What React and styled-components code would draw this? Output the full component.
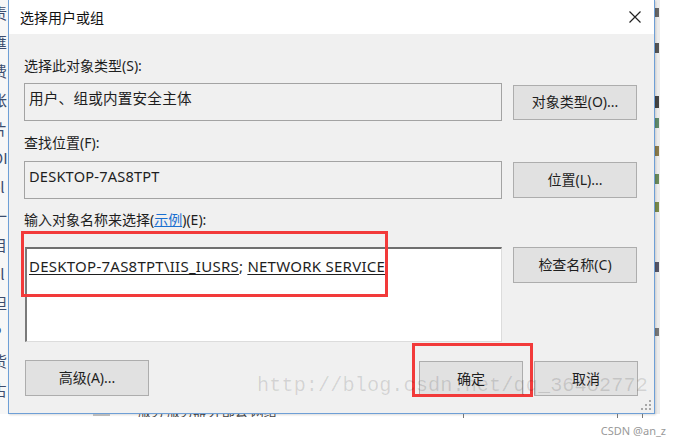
import React from "react";
import styled, { createGlobalStyle } from "styled-components";

const Global = createGlobalStyle`
  html, body {
    margin: 0;
    padding: 0;
    background: #fff;
  }
  body {
    font-family: "Noto Sans", "Noto Sans CJK SC", sans-serif;
    color: #1e1e1e;
    overflow: hidden;
  }
`;

const Page = styled.div`
  width: 681px;
  height: 443px;
  display: flex;
  flex-direction: column;
  background: #fff;
`;

const Desk = styled.div`
  display: flex;
  height: 414px;
`;

const LeftEdge = styled.div`
  width: 8px;
  overflow: hidden;
  background: #f7f7f7;
  display: flex;
  flex-direction: column;
  padding-top: 4px;
  gap: 12px;
  span {
    display: block;
    margin-left: -8px;
    font: 15px/17px "Noto Sans CJK SC", sans-serif;
    color: #3b4d70;
  }
`;

const RightEdge = styled.div`
  flex: 1;
  display: flex;
`;

const RightStrip = styled.div`
  width: 5px;
  background: #ededed;
  display: flex;
  flex-direction: column;
  padding-top: 8px;
  gap: 8px;
`;

const Mark = styled.div`
  width: 4px;
  height: ${(p) => p.h || 8}px;
  margin-top: ${(p) => p.gap || 0}px;
  background: ${(p) => p.c || "#555"};
`;

const Dialog = styled.div`
  position: relative;
  width: 645px;
  border: 1px solid #6e9fd6;
  border-top: none;
  background: #f0f0f0;
  display: flex;
  flex-direction: column;
  box-shadow: 1px 1px 2px rgba(0, 0, 0, 0.15);
`;

const TitleBar = styled.div`
  height: 34px;
  background: #fff;
  display: flex;
  align-items: center;
  justify-content: space-between;
  padding: 0 12px 0 11px;
  font-size: 14px;
  color: #111;
`;

const Body = styled.div`
  display: flex;
  flex-direction: column;
  padding: 23px 16px 15px 15px;
`;

const Label = styled.div`
  font-size: 14px;
  line-height: 18px;
  margin-top: ${(p) => p.top || 0}px;
  a {
    color: #1a6fd0;
    text-decoration: underline;
  }
`;

const Row = styled.div`
  position: relative;
  display: grid;
  grid-template-columns: 478px 124px;
  column-gap: 11px;
  align-items: ${(p) => (p.top ? "start" : "center")};
  margin-top: ${(p) => p.gap || 0}px;
`;

const Field = styled.div`
  height: 38px;
  box-sizing: border-box;
  border: 1px solid #a3a3a3;
  background: #f0f0f0;
  padding: 4px 4px;
  font-size: 14.6px;
  line-height: 20px;
  letter-spacing: 0.2px;
`;

const NameBox = styled.div`
  margin-left: 1px;
  height: 95px;
  box-sizing: border-box;
  background: #fff;
  border-top: 2px solid #6f6f6f;
  border-left: 2px solid #7a7a7a;
  border-right: 1px solid #dcdcdc;
  border-bottom: 1px solid #dcdcdc;
  padding: 8px 2px;
  font-size: 15px;
  line-height: 18px;
  letter-spacing: 0.25px;
  white-space: nowrap;
`;

const Name = styled.span`
  text-decoration: underline;
  text-underline-offset: 2px;
`;

const Button = styled.button`
  position: relative;
  width: ${(p) => p.w || 124}px;
  height: ${(p) => p.h || 36}px;
  box-sizing: border-box;
  background: #e1e1e1;
  border: 1px solid #adadad;
  font-family: "Noto Sans", "Noto Sans CJK SC", sans-serif;
  font-size: 14px;
  color: #1e1e1e;
  padding: 0 0 2px;
`;

const SideButtons = styled.div`
  display: flex;
  flex-direction: column;
  padding-top: ${(p) => p.pad || 0}px;
`;

const Footer = styled.div`
  display: flex;
  justify-content: space-between;
  align-items: flex-end;
  margin-top: 18px;
  padding-left: 1px;
`;

const Group = styled.div`
  display: flex;
  gap: 11px;
`;

const RedBox = styled.div`
  position: absolute;
  border: 3px solid #f23a3a;
  box-sizing: border-box;
  pointer-events: none;
  left: ${(p) => p.l}px;
  top: ${(p) => p.t}px;
  width: ${(p) => p.w}px;
  height: ${(p) => p.h}px;
`;

const Watermark = styled.div`
  position: absolute;
  left: 248px;
  top: 374px;
  font-family: "Liberation Mono", monospace;
  font-size: 20.2px;
  letter-spacing: 0.1px;
  color: rgba(0, 0, 0, 0.12);
  pointer-events: none;
  white-space: nowrap;
`;

const Grip = styled.svg`
  position: absolute;
  right: 3px;
  bottom: 3px;
`;

const Below = styled.div`
  position: relative;
  height: 29px;
`;

const Scrap = styled.div`
  position: absolute;
  left: ${(p) => p.l}px;
  top: 0;
  height: ${(p) => p.h || 3}px;
  overflow: hidden;
  font: 13px/13px "Noto Sans CJK SC", sans-serif;
  color: #444;
  span {
    display: block;
    margin-top: -10px;
  }
`;

const Stub = styled.div`
  position: absolute;
  left: ${(p) => p.l}px;
  top: 0;
  width: ${(p) => p.w || 1}px;
  height: ${(p) => p.h || 4}px;
  background: ${(p) => p.c || "#777"};
`;

const Credit = styled.div`
  position: absolute;
  right: 15px;
  top: 9px;
  font-family: "Noto Sans", sans-serif;
  font-size: 11px;
  color: #999;
`;

function CloseIcon() {
  return (
    <svg width="14" height="14" viewBox="0 0 14 14">
      <path d="M1.5 1.5 L12.5 12.5 M12.5 1.5 L1.5 12.5" stroke="#222" strokeWidth="1.2" />
    </svg>
  );
}

function ResizeGrip() {
  const dots = [
    [8, 0],
    [4, 4],
    [8, 4],
    [0, 8],
    [4, 8],
    [8, 8],
  ];
  return (
    <Grip width="10" height="10" viewBox="0 0 10 10">
      {dots.map(([x, y]) => (
        <rect key={`${x}-${y}`} x={x} y={y} width="2" height="2" fill="#a8a8a8" />
      ))}
    </Grip>
  );
}

const sideGlyphs = ["责", "匯", "费", "帐", "片", "OI", "el", "一", "目", "el", "担", "P", "货", "占"];

export default function App() {
  return (
    <>
      <Global />
      <Page>
        <Desk>
          <LeftEdge>
            {sideGlyphs.map((g, i) => (
              <span key={i}>{g}</span>
            ))}
          </LeftEdge>
          <Dialog>
            <TitleBar>
              <span>选择用户或组</span>
              <CloseIcon />
            </TitleBar>
            <Body>
              <Label>选择此对象类型(S):</Label>
              <Row gap={8}>
                <Field>用户、组或内置安全主体</Field>
                <Button h={35}>对象类型(O)...</Button>
              </Row>
              <Label top={13}>查找位置(F):</Label>
              <Row gap={9}>
                <Field>DESKTOP-7AS8TPT</Field>
                <Button>位置(L)...</Button>
              </Row>
              <Label top={12}>
                输入对象名称来选择(<a>示例</a>)(E):
              </Label>
              <Row top gap={18}>
                <NameBox>
                  <Name>DESKTOP-7AS8TPT\IIS_IUSRS</Name>; <Name>NETWORK SERVICE</Name>
                </NameBox>
                <SideButtons>
                  <Button>检查名称(C)</Button>
                </SideButtons>
                <RedBox l={-3} t={-16} w={367} h={66} />
              </Row>
              <Footer>
                <Button>高级(A)...</Button>
                <Group>
                  <Button w={104} h={35}>
                    确定
                    <RedBox l={-8} t={-19} w={121} h={54} />
                  </Button>
                  <Button w={104} h={35}>
                    取消
                  </Button>
                </Group>
              </Footer>
            </Body>
            <Watermark>http://blog.csdn.net/qq_36482772</Watermark>
            <ResizeGrip />
          </Dialog>
          <RightEdge>
            <RightStrip>
              <Mark h={9} c="#666" />
              <Mark h={10} gap={18} c="#555" />
              <Mark h={12} gap={35} c="#444" />
              <Mark h={10} gap={2} c="#5f8a6a" />
              <Mark h={10} gap={10} c="#8a7a4a" />
              <Mark h={10} gap={10} c="#6a8a5a" />
              <Mark h={10} gap={10} c="#7a8a4a" />
              <Mark h={10} gap={42} c="#556" />
              <Mark h={8} gap={48} c="#777" />
            </RightStrip>
          </RightEdge>
        </Desk>
        <Below>
          <Stub l={93} w={17} h={2} c="#bbb" />
          <Scrap l={138}>
            <span>服务 服务器 外部公 网络</span>
          </Scrap>
          <Stub l={463} />
          <Stub l={617} />
          <Stub l={642} />
          <Credit>CSDN @an_z</Credit>
        </Below>
      </Page>
    </>
  );
}
